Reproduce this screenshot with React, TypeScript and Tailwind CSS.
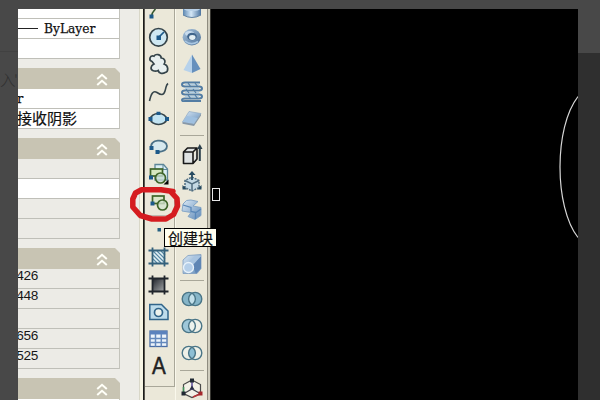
import type { ReactNode } from 'react';

type IconProps = { children: ReactNode };

const INK = '#35444a';
const GREEN = '#3e6428';
const BLUE = '#1d5a8a';

function Icon({ children }: IconProps) {
  return (
    <div className="flex h-[27.4px] w-full shrink-0 items-center justify-center">
      <svg width="24" height="24" viewBox="0 0 24 24" fill="none" className="shrink-0 overflow-visible">
        {children}
      </svg>
    </div>
  );
}

function Chevrons() {
  return (
    <svg width="12" height="14" viewBox="0 0 12 14" fill="none" stroke="#fffff8" strokeWidth="2">
      <path d="M1.2 6 6 1.8 10.800 6M1.200 12 6 7.800l4.800 4.200" />
    </svg>
  );
}

function SectionHeader() {
  return (
    <div className="flex h-[21px] w-[102px] shrink-0 items-center justify-end bg-[#c8c4b3] pt-0.5 pr-3 [clip-path:polygon(0_0,97px_0,102px_5px,102px_100%,0_100%)]">
      <Chevrons />
    </div>
  );
}

function Row({ children, white = false }: { children?: ReactNode; white?: boolean }) {
  return (
    <div
      className={`flex h-5 shrink-0 items-center overflow-hidden border-b border-[#bfbfb8] whitespace-nowrap ${
        white ? 'bg-white' : 'bg-[#ecebe6]'
      }`}
    >
      {children}
    </div>
  );
}

function Rows({ children }: { children: ReactNode }) {
  return <div className="w-[102px] shrink-0 border-r border-[#c3c3bb]">{children}</div>;
}

function Num({ value }: { value: string }) {
  return (
    <span className="-ml-[2px] pb-[3px] font-['Liberation_Mono',monospace] text-[13.5px] leading-4 tracking-[-0.8px] text-[#161616]">
      {value}
    </span>
  );
}

function Properties() {
  return (
    <div className="flex w-[121px] shrink-0 flex-col overflow-hidden bg-[#edece7]">
      <Rows>
        <div className="h-[10px] border-b border-[#bfbfb8] bg-white" />
        <Row white>
          <span className="h-[1.5px] w-5 shrink-0 bg-[#222]" />
          <span className="ml-[6px] inline-block origin-left scale-x-[0.94] font-['DejaVu_Serif',serif] text-[13px] text-[#111] [-webkit-text-stroke:0.25px_#111]">
            ByLayer
          </span>
        </Row>
        <Row white />
      </Rows>
      <div className="h-[9px] shrink-0" />
      <SectionHeader />
      <Rows>
        <Row white>
          <span className="-ml-[1px] font-['DejaVu_Serif',serif] text-[13px] text-[#111] [-webkit-text-stroke:0.25px_#111]">r</span>
        </Row>
        <Row white>
          <span className="-ml-[1px] pb-[2px] font-['Noto_Sans_CJK_SC',sans-serif] text-[15px] leading-4 text-[#111] [-webkit-text-stroke:0.2px_#111]">
            接收阴影
          </span>
        </Row>
      </Rows>
      <div className="h-[9px] shrink-0" />
      <SectionHeader />
      <Rows>
        <Row />
        <Row white />
        <Row />
        <Row />
      </Rows>
      <div className="h-[9px] shrink-0" />
      <SectionHeader />
      <Rows>
        <Row><Num value="426" /></Row>
        <Row><Num value="448" /></Row>
        <Row />
        <Row><Num value="656" /></Row>
        <Row><Num value="525" /></Row>
      </Rows>
      <div className="h-[9px] shrink-0" />
      <SectionHeader />
      <Rows>
        <div className="h-1 bg-white" />
      </Rows>
    </div>
  );
}

function HatchFrame({ stroke }: { stroke: string }) {
  return <path d="M5.500 2.500v19M17.500 2.500v19M1.500 5.500h20M1.500 18.500h20" stroke={stroke} strokeWidth="1.8" />;
}

function DrawToolbar() {
  return (
    <div className="flex h-[378px] w-[30px] shrink-0 flex-col items-center border-r border-b border-[#a9a799] bg-[#ebe8d9] pr-px">
      <div className="h-[14.3px] shrink-0">
        <svg width="24" height="14" viewBox="0 0 24 14" fill="none">
          <path d="M8.5 0Q5 3 4.500 8" stroke="#35572f" strokeWidth="1.6" />
          <rect x="2.500" y="5.500" width="4" height="4" fill={BLUE} />
        </svg>
      </div>
      <Icon>
        <circle cx="11.500" cy="12.300" r="8.800" fill="#cfe8f2" stroke={INK} strokeWidth="1.7" />
        <path d="m12 12 5-5" stroke={BLUE} strokeWidth="1.7" />
        <rect x="9.500" y="10.500" width="4.500" height="4.500" fill={BLUE} />
      </Icon>
      <Icon>
        <path
          d="M5 9.500C1.500 8.500 2.500 3 7 4.200 8.500 1.500 14 2 14.200 6c4 .3 4.500 4 3 6 4.500 1.500 4.500 7.500 1 8.500-3 2-6.500.5-7-2-3 1.500-8 .5-7-3.500.3-1.500 2-2.500 2.800-3z"
          fill="#e8f0f0"
          stroke={INK}
          strokeWidth="1.7"
        />
      </Icon>
      <Icon>
        <path d="M2.500 21C4 14 6 10 10 12.500S16.500 16 18 11s1-6 3-7.500" stroke={INK} strokeWidth="1.6" />
      </Icon>
      <Icon>
        <ellipse cx="11.500" cy="12" rx="8" ry="5.500" fill="#c2e4f2" stroke={INK} strokeWidth="1.7" />
        <path d="M1.500 10h4v4h-4zM18 10h4v4h-4zM9.500 4.800h4v3.200h-4z" fill={BLUE} />
      </Icon>
      <Icon>
        <path d="M4.500 13C1.500 4 19 3 20 11c0 4-4 5.500-8.500 6z" fill="#d7e9ee" />
        <path d="M4.500 13C1.500 4 19 3 20 11c0 4-4 5.500-8.500 6" stroke="#4b7187" strokeWidth="1.8" />
        <path d="M2.500 11h4v4h-4zM8.500 15h4v4h-4z" fill={BLUE} />
      </Icon>
      <Icon>
        <path d="M8 2.500h8.500l4 4.500v11H8z" fill="#dceff5" stroke="#5e8799" strokeWidth="1.3" />
        <path d="M16 2.500v5h4.500" stroke="#5e8799" />
        <rect x="3.500" y="7" width="12" height="7" fill="#d6e8c0" stroke={GREEN} strokeWidth="1.7" />
        <circle cx="13.500" cy="16" r="5" fill="#c5dcd2" fillOpacity=".8" stroke={GREEN} strokeWidth="1.7" />
        <path d="M2 13.500h4v4H2z" fill={BLUE} />
        <path d="M21.500 17.500v5h-5z" fill="#050505" />
      </Icon>
      <Icon>
        <rect x="5.500" y="7" width="11.500" height="7.500" fill="#dbe7cb" stroke={GREEN} strokeWidth="1.7" />
        <circle cx="15.500" cy="16" r="5" fill="#d3e2cd" fillOpacity=".8" stroke={GREEN} strokeWidth="1.7" />
        <path d="M3.500 12.500h4v4h-4z" fill={BLUE} />
      </Icon>
      <div className="h-px w-5 shrink-0 bg-[#bdbab0]" />
      <Icon>
        <rect x="10.500" y="10" width="3.500" height="3.500" fill="#256181" />
      </Icon>
      <Icon>
        <path d="M6 6h12v12H6z" fill="#e3f1f5" />
        <path d="m6 6 12 12M10 6l8 8M14 6l4 4M6 10l8 8M6 14l4 4" stroke="#5788a3" strokeWidth="1.2" />
        <HatchFrame stroke="#34617b" />
      </Icon>
      <Icon>
        <defs>
          <linearGradient id="gradFill" x1="0" y1="0" x2="1" y2="1">
            <stop offset="0" stopColor="#25292f" />
            <stop offset="1" stopColor="#a5a8a9" />
          </linearGradient>
        </defs>
        <path d="M6 6h12v12H6z" fill="url(#gradFill)" />
        <HatchFrame stroke="#20252b" />
      </Icon>
      <Icon>
        <path d="M2.800 4.500h11.700l6.500 6.500v8.500H2.800z" fill="#bddceb" stroke="#31658a" strokeWidth="1.5" />
        <circle cx="11.500" cy="12.500" r="4" fill="#edf3ed" stroke="#31658a" strokeWidth="1.7" />
      </Icon>
      <Icon>
        <rect x="3" y="4" width="17" height="15.500" fill="#edf4fb" stroke="#4a6ea6" strokeWidth="1.3" />
        <path d="M3 4h17v3.500H3z" fill="#5b82bd" />
        <path d="M3 11.500h17M3 15.500h17M8.500 7v12.500M14.300 7v12.500" stroke="#6489bd" strokeWidth="1.5" />
      </Icon>
      <div className="flex h-[27px] shrink-0 items-center font-['Liberation_Sans',sans-serif] text-[24px] leading-none text-[#222]">
        <span className="inline-block scale-x-[0.86] [-webkit-text-stroke:0.5px_#222]">A</span>
      </div>
    </div>
  );
}

function Union({ left, middle, right }: { left: string; middle: string; right: string }) {
  return (
    <Icon>
      <circle cx="8.800" cy="12" r="6.600" fill={left} />
      <circle cx="15.200" cy="12" r="6.600" fill={right} />
      <path d="M12 6.200a6.600 6.600 0 0 1 0 11.600 6.600 6.600 0 0 1 0-11.600" fill={middle} />
      <circle cx="8.800" cy="12" r="6.600" stroke="#4a7587" strokeWidth="1.4" />
      <circle cx="15.200" cy="12" r="6.600" stroke="#4a7587" strokeWidth="1.4" />
    </Icon>
  );
}

function ModelingToolbar() {
  return (
    <div className="flex w-[34px] shrink-0 flex-col items-center overflow-hidden border-l border-[#faf8ec] bg-[#ebe8d9] pr-[2px]">
      <svg width="0" height="0" className="absolute">
        <defs>
          <linearGradient id="steel">
            <stop offset="0" stopColor="#5c86b0" />
            <stop offset=".45" stopColor="#d4e7f7" />
            <stop offset="1" stopColor="#4d749f" />
          </linearGradient>
          <linearGradient id="sky" x1="0" y1="0" x2="1" y2="1">
            <stop offset="0" stopColor="#dceaf6" />
            <stop offset="1" stopColor="#5f8ab8" />
          </linearGradient>
          <linearGradient id="dusk" x1="0" y1="0" x2="1" y2="1">
            <stop offset="0" stopColor="#a9c4de" />
            <stop offset="1" stopColor="#4c6f96" />
          </linearGradient>
        </defs>
      </svg>
      <div className="h-[14.3px] shrink-0">
        <svg width="24" height="14" viewBox="0 0 24 14">
          <path d="M3 0h18v6q-9 5-18 0z" fill="url(#steel)" />
          <ellipse cx="12" cy="0" rx="8" ry="2" fill="#b9d1e8" />
          <path d="M3 6q9 5 18 0" fill="none" stroke="#6383a3" />
        </svg>
      </div>
      <Icon>
        <ellipse cx="11.800" cy="12.300" rx="9.200" ry="8.200" fill="url(#dusk)" />
        <ellipse cx="9.500" cy="8.500" rx="4.500" ry="2.500" fill="#c9dcee" />
        <ellipse cx="12" cy="11.500" rx="4.800" ry="3.800" fill="#41658c" />
        <ellipse cx="12.300" cy="12.500" rx="3.200" ry="2.400" fill="#e4eef3" />
        <path d="M5 16q6 5 13 .5" stroke="#a9c7e2" strokeWidth="1.6" />
      </Icon>
      <Icon>
        <path d="M12 2.500 3.500 18l8.500 3z" fill="#b7d2eb" />
        <path d="M12 2.500 20.500 17 12 21z" fill="#6690bd" />
      </Icon>
      <Icon>
        <path
          d="M20 2.500H5Q2 2.500 2 4.500t3 2h14q3 0 3 2t-3 2H5q-3 0-3 2t3 2h14q3 0 3 2t-3 2H5q-3 0-3 1.500T5 21h16"
          stroke="#537da4"
          strokeWidth="2"
        />
        <path d="M5 4.500h14M5 8.500h14M5 12.500h14M5 16.500h14" stroke="#b3cfe4" strokeWidth="1.4" />
        <path d="m8 3 3 4M15 3l3 4M6 9l3 4M13 9l3 4M8 15l3 4M15 15l3 4" stroke="#537da4" strokeWidth="1.2" />
      </Icon>
      <Icon>
        <path d="M9 4.500 21 6.500l-7 10.500L2.500 15z" fill="url(#sky)" stroke="#8fabc6" strokeWidth=".7" />
        <path d="m7 9 11 2-4 6-11.500-2z" fill="#9fc0e0" />
        <path d="m2.500 15 11.500 2 7-10.500v2L14 19 2.500 16.800z" fill="#8798a8" />
      </Icon>
      <div className="mt-[2px] mb-[5px] h-px w-6 shrink-0 bg-[#a9a799]" />
      <Icon>
        <path
          d="M3.500 9h9.500v11.500H3.500zM3.500 9 7.500 5H17l-4 4M17 5v11l-4 4.500"
          fill="#dfe3e3"
          stroke="#191919"
          strokeWidth="1.6"
          strokeLinejoin="round"
        />
        <path d="M19.800 18V4" stroke="#2c3f4b" strokeWidth="2" />
        <path d="m19.800 1 2.700 5h-5.400z" fill="#2c3f4b" />
      </Icon>
      <Icon>
        <path
          d="m12 7 7 3.500v7L12 21l-7-3.500v-7z"
          fill="#c4d9e4"
          stroke="#526e80"
          strokeWidth="1.5"
          strokeDasharray="2 1"
        />
        <path d="m5 10.500 7 3.500 7-3.500M12 14v7" stroke="#526e80" strokeWidth="1.5" />
        <path d="M12 10V3M5 17l-2 1M19 17l2 1" stroke="#274a61" strokeWidth="1.8" />
        <path d="m12 1 3.500 4h-7zM2.500 15v4.500H7zM21.500 15v4.500H17z" fill="#274a61" />
      </Icon>
      <Icon>
        <path
          d="M3 7q3-5 8-4l7 1.500-5 4.500 8 1.500v8l-6 4-7-3 3-4-9-1.500z"
          fill="url(#sky)"
          stroke="#7fa1c4"
          strokeWidth=".9"
          strokeLinejoin="round"
        />
        <path d="m3 8 8 2.500v4l5 1 5-3.500M15.500 15v7" stroke="#5a88b8" strokeWidth="1.3" />
      </Icon>
      <Icon>
        <path d="M3 7h15v10H3z" fill="url(#sky)" />
      </Icon>
      <Icon>
        <path d="M8 3.500 21 2.500v14l-4 5H3V8z" fill="url(#sky)" stroke="#7d9dc0" strokeWidth=".8" />
        <path d="m12 13 9-9v12l-5 5.500z" fill="#5f86b5" />
        <path d="m5 13 10-9h6l-8 9z" fill="#a8c4e0" />
        <circle cx="8.500" cy="15.500" r="5" fill="#b5cfe9" stroke="#e8f2fa" strokeWidth="1.300" />
      </Icon>
      <div className="mt-[2px] mb-1 h-px w-6 shrink-0 bg-[#a9a799]" />
      <Union left="#86b5c8" middle="#c3e0ea" right="#86b5c8" />
      <Union left="#9ec7d9" middle="#edf2ed" right="#f0f1e9" />
      <Union left="#eff1e8" middle="#8ebfd4" right="#eff1e8" />
      <div className="my-[3px] h-px w-6 shrink-0 bg-[#a9a799]" />
      <Icon>
        <path d="m12 4 8.500 4.500v9L12 21.500l-8.500-4v-9z" fill="#f3f1e7" stroke="#4a4a4a" strokeWidth="1.2" />
        <path d="m4 17.500 8-4.500 8 4.500" stroke="#45454a" strokeWidth="1.3" />
        <path d="M3.500 18v-7" stroke="#42915a" strokeWidth="1.6" />
        <path d="m13 21 7-3" stroke="#b83538" strokeWidth="1.6" />
        <path d="M12 5v9" stroke="#6355a0" strokeWidth="1.6" />
        <path d="M10 2.500h4v4h-4zM1.500 15.500h4v4h-4z" fill="#202933" />
        <path d="M18.500 15.500h4v4h-4z" fill="#a5282c" />
        <path d="m12 9.500 2.500 4h-5z" fill="#292f47" />
      </Icon>
    </div>
  );
}

function Canvas() {
  return (
    <div className="flex min-w-0 flex-1 justify-end overflow-hidden bg-black">
      <svg width="30" height="391" viewBox="0 0 30 391" fill="none">
        <path d="M30 87.500C6 118 6 198 30 228.500" stroke="#d6d6d6" strokeWidth="1.2" />
      </svg>
    </div>
  );
}

export default function App() {
  return (
    <div className="relative flex h-[400px] w-[600px] overflow-hidden bg-[#484848] pt-[9px]">
      <div className="h-full w-[18px] shrink-0 overflow-hidden">
        <div className="h-[43px] border-b border-[#414141]" />
        <div className="mt-[17px] font-['Noto_Sans_CJK_SC',sans-serif] text-[15.5px] leading-5 font-light tracking-[-1.5px] whitespace-nowrap text-[#303030]">
          入'
        </div>
      </div>
      <div className="flex h-[391px] w-[560px] shrink-0 overflow-hidden">
        <Properties />
        <div className="w-1 shrink-0 border-l border-[#d9d7c8] bg-[#f7f5e3]" />
        <div className="w-[2px] shrink-0 border-r border-[#5a584f] bg-[#1c1c19]" />
        <div className="w-[30px] shrink-0 bg-[#ebe8d9]">
          <DrawToolbar />
        </div>
        <ModelingToolbar />
        <div className="-ml-[2px] w-1 shrink-0 border-r border-l border-r-[#393833] border-l-[#8f8c80] bg-[#cfccbd]" />
        <Canvas />
      </div>
      <div className="mt-11 flex-1 bg-[#2f2f2f]" />

      <svg className="absolute top-[184px] left-[127px]" width="57" height="42" viewBox="0 0 57 42" fill="none">
        <path
          d="M46 7.500 34 5.800H14.500L8.500 9 5.800 15v8l7.500 8.500L25 35h14l7.500-4.500 4-8.500-.5-7.500-6-6.500"
          stroke="#d51c20"
          strokeWidth="5.500"
          strokeLinejoin="round"
          strokeLinecap="round"
        />
      </svg>
      <div className="absolute top-[188px] left-[212px] h-[13px] w-2 border border-[#e8e8e8] bg-black" />
      <div className="absolute top-[228px] left-[164px] flex h-[19px] w-[53px] items-center justify-center border border-black bg-[#fffff0] font-['Noto_Sans_CJK_SC',sans-serif] text-[15px] leading-none whitespace-nowrap text-[#111] [-webkit-text-stroke:0.2px_#111]">
        创建块
      </div>
    </div>
  );
}
